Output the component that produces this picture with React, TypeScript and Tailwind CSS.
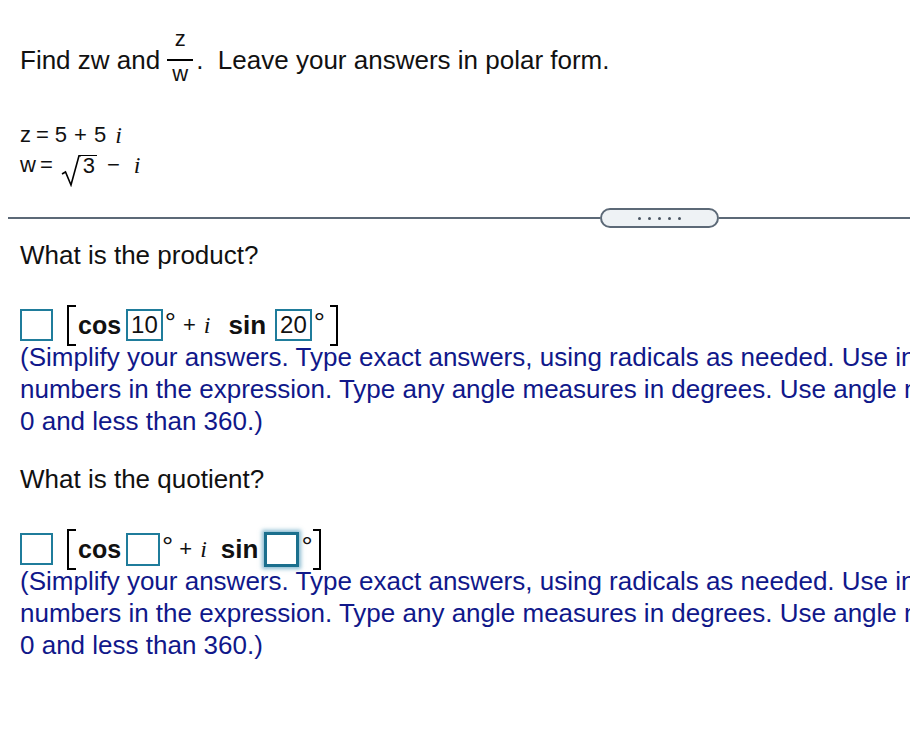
import React from 'react'

const teal = 'border-[#1f7c9b]'

const AnswerBox = ({ value, focused, wide }: { value?: string, focused?: boolean, wide?: boolean }) => {
    if (focused) {
        return (
            <div className="w-[35px] h-[35px] border-[3px] border-[#1b6f8d] shadow-[0_0_4px_2px_rgba(40,130,170,0.55)] bg-white" />
        )
    }
    return (
        <div className={`flex items-center justify-center border-2 ${teal} bg-white ${wide ? 'h-[32px] px-[3px]' : 'w-[34px] h-[33px]'}`}>
            {value && <span className="text-[24px] leading-none">{value}</span>}
        </div>
    )
}

const Italic = ({ className }: { className?: string }) => (
    <span className={`italic ${className ?? ''}`} style={{ fontFamily: '"Liberation Serif", serif' }}>i</span>
)

const PolarRow = ({ cosValue, sinValue, focusSin }: { cosValue?: string, sinValue?: string, focusSin?: boolean }) => {
    const filled = !!cosValue
    return (
        <div className="flex items-center h-[28px] pl-[20px]">
            <div className={`w-[33px] h-[32px] border-2 ${teal}`} />
            {/* left bracket */}
            <div className="ml-[14px] w-[9px] h-[41px] border-l-[2.5px] border-t-[2px] border-b-[2px] border-black" />
            <span className="ml-[2px] font-bold text-[25px] leading-none">cos</span>
            <div className="ml-[5px]">
                <AnswerBox value={cosValue} wide={filled} />
            </div>
            <span className="self-start text-[28px] leading-[24px] ml-[2px]">°</span>
            <span className={`${filled ? 'ml-[7px]' : 'ml-[6px]'} text-[22px] leading-none`}>+</span>
            <Italic className="ml-[8px] text-[24px] leading-none" />
            <span className={`${filled ? 'ml-[18px]' : 'ml-[14px]'} font-bold text-[26px] leading-none`}>sin</span>
            <div className={filled ? 'ml-[9px]' : 'ml-[6px]'}>
                {focusSin ? <AnswerBox focused /> : <AnswerBox value={sinValue} wide={!!sinValue} />}
            </div>
            <span className="self-start text-[28px] leading-[24px] ml-[2px]">°</span>
            {/* right bracket */}
            <div className={`${filled ? 'ml-[5px]' : 'ml-0'} w-[8px] h-[41px] border-r-[2.5px] border-t-[2px] border-b-[2px] border-black`} />
        </div>
    )
}

const Instructions = () => (
    <p className="mt-[2px] pl-[20px] text-[26px] leading-[32px] text-[#10188a] whitespace-nowrap">
        (Simplify your answers. Type exact answers, using radicals as needed. Use integers or decimals for any
        <br />
        numbers in the expression. Type any angle measures in degrees. Use angle measures greater than or equal to
        <br />
        0 and less than 360.)
    </p>
)

export default function App() {
    return (
        <div
            className="w-[910px] h-[754px] overflow-hidden bg-white text-[#111] pt-[28px]"
            style={{ fontFamily: '"Liberation Sans", Arial, sans-serif' }}
        >
            {/* question line */}
            <div className="flex items-start pl-[20px]">
                <span className="text-[26px] leading-none mt-[19px]">Find zw and</span>
                <div className="ml-[7px] flex flex-col items-center text-[22px]">
                    <span className="leading-none">z</span>
                    <div className="mt-[9px] h-[2px] w-[26px] bg-black" />
                    <span className="leading-none mt-[2px]">w</span>
                </div>
                <span className="text-[26px] leading-none mt-[19px] ml-[3px] whitespace-pre">.  Leave your answers in polar form.</span>
            </div>

            {/* given values */}
            <div className="mt-[35px] pl-[20px] text-[22px]">
                <div className="flex items-start h-[30px] leading-[30px]">
                    <span>z</span>
                    <span className="ml-[5px]">=</span>
                    <span className="ml-[6px]">5</span>
                    <span className="ml-[7px]">+</span>
                    <span className="ml-[7px]">5</span>
                    <Italic className="ml-[9px] text-[24px]" />
                </div>
                <div className="flex items-start h-[30px]">
                    <span className="leading-[30px]">w</span>
                    <span className="leading-[30px] ml-[4px]">=</span>
                    <div className="ml-[8px] mt-[5px] flex items-start">
                        <svg width="20" height="32" viewBox="0 0 20 32" fill="none" stroke="black" strokeLinejoin="miter">
                            <path d="M1 19 L4.5 17 L10 30 L18 0.75 L20 0.75" strokeWidth="1.6" />
                        </svg>
                        <span className="border-t-[1.5px] border-black leading-[19px] pl-[2px] pr-[2px]">3</span>
                    </div>
                    <span className="leading-[30px] ml-[10px]">−</span>
                    <Italic className="leading-[30px] ml-[14px] text-[24px]" />
                </div>
            </div>

            {/* divider */}
            <div className="mt-[28px] flex items-center h-[20px] pl-[8px]">
                <div className="w-[592px] h-[2px] bg-[#5c6977]" />
                <div className="w-[119px] h-[20px] rounded-full border-2 border-[#5c6977] bg-[#eef2f5] flex items-center justify-center gap-[7px]">
                    <span className="w-[3px] h-[3px] rounded-full bg-[#4a5563]" />
                    <span className="w-[3px] h-[3px] rounded-full bg-[#4a5563]" />
                    <span className="w-[3px] h-[3px] rounded-full bg-[#4a5563]" />
                    <span className="w-[3px] h-[3px] rounded-full bg-[#4a5563]" />
                    <span className="w-[3px] h-[3px] rounded-full bg-[#4a5563]" />
                </div>
                <div className="flex-1 h-[2px] bg-[#5c6977]" />
            </div>

            {/* product */}
            <p className="mt-[11px] pl-[20px] text-[26px] leading-[32px]">What is the product?</p>
            <div className="mt-[40px]">
                <PolarRow cosValue="10" sinValue="20" />
            </div>
            <Instructions />

            {/* quotient */}
            <p className="mt-[26px] pl-[20px] text-[26px] leading-[32px]">What is the quotient?</p>
            <div className="mt-[40px]">
                <PolarRow focusSin />
            </div>
            <Instructions />
        </div>
    )
}
